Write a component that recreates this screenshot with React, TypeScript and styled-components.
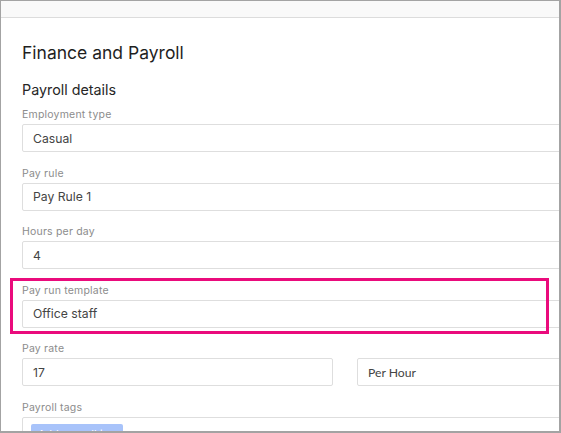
import styled, { createGlobalStyle } from "styled-components";

const GlobalStyle = createGlobalStyle`
  html, body {
    margin: 0;
    padding: 0;
    background: #ffffff;
  }
  *, *::before, *::after {
    box-sizing: border-box;
  }
`;

const Frame = styled.div`
  width: 561px;
  height: 433px;
  border-style: solid;
  border-color: #a3a3a3;
  border-width: 1px 2px 2px 1px;
  overflow: hidden;
  font-family: Inter, "Noto Sans", sans-serif;
  background: #ffffff;
`;

const TopBar = styled.div`
  height: 17px;
  background: #f9f9f9;
  border-bottom: 1px solid #dcdcdc;
`;

const Content = styled.div`
  padding: 24px 0 0 21px;
`;

const Form = styled.div`
  width: 646px;
`;

const PageTitle = styled.h1`
  margin: 0 0 17px;
  font-size: 17.5px;
  line-height: 22px;
  font-weight: 400;
  color: #1f1f1f;
`;

const SectionTitle = styled.h2`
  margin: 0 0 8px;
  font-size: 14.3px;
  line-height: 18px;
  font-weight: 400;
  color: #262626;
`;

const Fields = styled.div`
  display: flex;
  flex-direction: column;
  gap: 13.5px;
`;

const Field = styled.div<{ $highlight?: boolean }>`
  position: relative;

  ${(p) =>
    p.$highlight &&
    `
    &::after {
      content: "";
      position: absolute;
      left: -12px;
      right: 119px;
      top: -4.5px;
      bottom: -6px;
      border: 3px solid #ea0b7c;
      pointer-events: none;
    }
  `}
`;

const Label = styled.div`
  font-size: 10.5px;
  line-height: 15px;
  letter-spacing: 0.2px;
  color: #8c8c8c;
  margin-bottom: 2px;
`;

const Input = styled.div<{ $font?: string }>`
  height: 28px;
  border: 1px solid #dedede;
  border-radius: 2px;
  padding: 0 10px;
  display: flex;
  align-items: center;
  font-size: 12.2px;
  color: #444444;
  font-family: ${(p) => p.$font ?? "inherit"};
`;

const Row = styled.div`
  display: grid;
  grid-template-columns: 311px 1fr;
  gap: 24px;
`;

const TagBox = styled.div`
  display: flex;
  align-items: flex-start;
  border: 1px solid #dedede;
  border-radius: 2px;
  padding: 6px 8px;
  height: 34px;
`;

const TagButton = styled.div`
  display: flex;
  align-items: center;
  justify-content: center;
  width: 92px;
  height: 20px;
  background: #a8c3fa;
  border-radius: 2px;
  color: #ffffff;
  font-size: 11px;
  white-space: nowrap;
`;

const App = () => {
  return (
    <>
      <GlobalStyle />
      <Frame>
        <TopBar />
        <Content>
          <Form>
            <PageTitle>Finance and Payroll</PageTitle>
            <SectionTitle>Payroll details</SectionTitle>
            <Fields>
              <Field>
                <Label>Employment type</Label>
                <Input>Casual</Input>
              </Field>
              <Field>
                <Label>Pay rule</Label>
                <Input>Pay Rule 1</Input>
              </Field>
              <Field>
                <Label>Hours per day</Label>
                <Input>4</Input>
              </Field>
              <Field $highlight>
                <Label>Pay run template</Label>
                <Input>Office staff</Input>
              </Field>
              <Field>
                <Label>Pay rate</Label>
                <Row>
                  <Input>17</Input>
                  <Input $font={'Lato, "Noto Sans", sans-serif'}>Per Hour</Input>
                </Row>
              </Field>
              <Field>
                <Label>Payroll tags</Label>
                <TagBox>
                  <TagButton>Add payroll tag</TagButton>
                </TagBox>
              </Field>
            </Fields>
          </Form>
        </Content>
      </Frame>
    </>
  );
};

export default App;
